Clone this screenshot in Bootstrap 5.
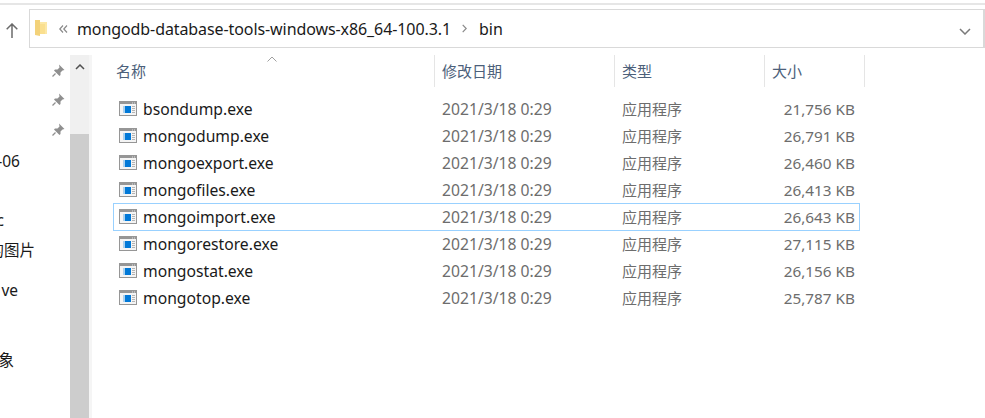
<!DOCTYPE html>
<html lang="zh-CN">
<head>
    <meta charset="UTF-8">
    <title>bin</title>
    <link href="https://cdn.jsdelivr.net/npm/bootstrap@5.3.0/dist/css/bootstrap.min.css" rel="stylesheet">
    <style>
        body {
            width: 985px;
            height: 418px;
            overflow: hidden;
            background: #fff;
            font-family: "Noto Sans", "Noto Sans CJK SC", sans-serif;
            font-size: 15.5px;
            color: #1a1a1a;
        }
        .top-rule {
            height: 2px;
            margin-top: 3px;
            background: #e6e6e6;
        }
        .toolbar {
            height: 50px;
            padding-top: 4px;
        }
        .up-btn {
            width: 29px;
            padding: 14px 5px 0 0;
        }
        .address-bar {
            height: 39px;
            width: 956px;
            padding-left: 5px;
            border: 1px solid #d9d9d9;
            border-right-width: 2px;
            font-size: 16px;
        }
        .address-path { letter-spacing: -.09px; }
        .crumb-back { width: 30px; padding-left: 12px; }
        .crumb-next { width: 28px; padding-left: 11px; }
        .drop-btn { width: 24px; padding-top: 3px; }
        .main-pane { height: 363px; }
        .nav-pane { width: 70px; overflow: hidden; }
        .nav-row {
            height: 30px;
            padding-right: 5px;
            white-space: nowrap;
        }
        .pin-row { margin-bottom: -.4px; }
        .nav-clip { overflow: hidden; }
        .nav-clip span { flex-shrink: 0; }
        .pad-06 { padding-right: 50px; margin-top: 2px; }
        .pad-c { padding-right: 66px; }
        .pad-pic { padding-right: 35px; }
        .pad-ve { padding-right: 52px; }
        .pad-obj { padding-right: 56px; }
        .gap-ve { margin-top: 10px; }
        .gap-obj { margin-top: 40px; }
        .gap-c { margin-top: 29px; }
        .scroll-track {
            width: 19px;
            background: #f0f0f0;
        }
        .scroll-up { height: 15px; margin-top: 4px; }
        .scroll-thumb {
            margin-top: 60px;
            background: #cdcdcd;
        }
        .files-pane { border-left: 3px solid #f5f5f5; }
        .col-head {
            height: 32px;
            color: #4c607a;
            font-size: 15px;
            padding-left: 7px;
            border-right: 1px solid #e5e5e5;
        }
        .head-name { width: 343px; padding-left: 24px; position: relative; }
        .head-date { width: 180px; }
        .head-type { width: 150px; }
        .head-size { width: 100px; }
        .sort-mark { position: absolute; left: 175px; top: 1px; }
        .file-list { margin-top: 9px; margin-left: 21px; width: 747px; }
        .file-row {
            height: 27px;
            border: 1px solid transparent;
            font-size: 15.7px;
        }
        .file-row.is-focus { border-color: #99d1ff; height: 28px; margin-top: -1px; padding-top: 1px; }
        .file-icon { margin: 0 6px 2px 5px; flex-shrink: 0; }
        .file-name { width: 299px; }
        .file-date { width: 180px; color: #6d6d6d; }
        .file-type { width: 118px; color: #6d6d6d; font-size: 15px; }
        .file-size { width: 115px; color: #6d6d6d; font-size: 15.3px; text-align: right; }
    </style>
</head>
<body>
    <div class="top-rule"></div>

    <div class="toolbar d-flex">
        <div class="up-btn d-flex justify-content-center align-items-start">
            <svg width="12" height="15" viewBox="0 0 12 15"><path d="M6 1V15M.7 6.300 6 1l5.300 5.300" fill="none" stroke="#6b6b6b" stroke-width="1.500"/></svg>
        </div>
        <div class="address-bar d-flex align-items-center">
            <svg width="12" height="17" viewBox="0 0 12 17">
                <path d="M0 0h5v16l-5-1z" fill="#f3d27a"/>
                <path d="M5 2h7v12H5z" fill="#fce8a6"/>
                <path d="M5 4h5v10H5z" fill="#fadf8f"/>
            </svg>
            <div class="crumb-back d-flex">
                <svg width="9" height="8" viewBox="0 0 9 8"><path d="M4 .500.800 4 4 7.500M8 .500 4.800 4 8 7.500" fill="none" stroke="#8a8a8a" stroke-width="1.200"/></svg>
            </div>
            <span class="address-path">mongodb-database-tools-windows-x86_64-100.3.1</span>
            <div class="crumb-next d-flex">
                <svg width="5" height="9" viewBox="0 0 5 9"><path d="M.700.800 4.200 4.500.700 8.200" fill="none" stroke="#8a8a8a" stroke-width="1.200"/></svg>
            </div>
            <span>bin</span>
            <div class="flex-grow-1"></div>
            <div class="drop-btn">
                <svg width="12" height="7" viewBox="0 0 12 7"><path d="M1 1l5 5 5-5" fill="none" stroke="#7a7a7a" stroke-width="1.500"/></svg>
            </div>
        </div>
    </div>

    <div class="main-pane d-flex">
        <div class="nav-pane">
            <div class="nav-row pin-row d-flex align-items-center justify-content-end"><svg width="13" height="13" viewBox="0 0 13 13"><path d="M7 .5l5.500 5.500-2 .5-2 2v2.500l-1 1-5.500-5.500 1-1h2.500l2-2z" fill="#8f8f8f"/><path d="M3.500 9.500.5 12.500" stroke="#8f8f8f" stroke-width="1.200"/></svg></div>
            <div class="nav-row pin-row d-flex align-items-center justify-content-end"><svg width="13" height="13" viewBox="0 0 13 13"><path d="M7 .5l5.500 5.500-2 .5-2 2v2.500l-1 1-5.500-5.500 1-1h2.500l2-2z" fill="#8f8f8f"/><path d="M3.500 9.500.5 12.500" stroke="#8f8f8f" stroke-width="1.200"/></svg></div>
            <div class="nav-row d-flex align-items-center justify-content-end"><svg width="13" height="13" viewBox="0 0 13 13"><path d="M7 .5l5.500 5.500-2 .5-2 2v2.500l-1 1-5.500-5.500 1-1h2.500l2-2z" fill="#8f8f8f"/><path d="M3.500 9.500.5 12.500" stroke="#8f8f8f" stroke-width="1.200"/></svg></div>
            <div class="nav-row nav-clip pad-06 d-flex align-items-center justify-content-end"><span>-06</span></div>
            <div class="nav-row nav-clip pad-c gap-c d-flex align-items-center justify-content-end"><span>c</span></div>
            <div class="nav-row nav-clip pad-pic d-flex align-items-center justify-content-end"><span>的图片</span></div>
            <div class="nav-row nav-clip pad-ve gap-ve d-flex align-items-center justify-content-end"><span>ve</span></div>
            <div class="nav-row nav-clip pad-obj gap-obj d-flex align-items-center justify-content-end"><span>对象</span></div>
        </div>
        <div class="scroll-track d-flex flex-column">
            <div class="scroll-up d-flex justify-content-center align-items-center">
                <svg width="10" height="6" viewBox="0 0 10 6"><path d="M1 5l4-4 4 4" fill="none" stroke="#505050" stroke-width="1.500"/></svg>
            </div>
            <div class="scroll-thumb flex-grow-1"></div>
        </div>
        <div class="files-pane flex-grow-1">
            <div class="d-flex">
                <div class="col-head head-name d-flex align-items-center">名称
                    <svg class="sort-mark" width="10" height="6" viewBox="0 0 10 6"><path d="M.5 5.500 5 1l4.500 4.500" fill="none" stroke="#a0a0a0"/></svg>
                </div>
                <div class="col-head head-date d-flex align-items-center">修改日期</div>
                <div class="col-head head-type d-flex align-items-center">类型</div>
                <div class="col-head head-size d-flex align-items-center">大小</div>
            </div>
            <div class="file-list" id="file-list"></div>
        </div>
    </div>

    <script>
        const files = [
            ['bsondump.exe', '21,756 KB'],
            ['mongodump.exe', '26,791 KB'],
            ['mongoexport.exe', '26,460 KB'],
            ['mongofiles.exe', '26,413 KB'],
            ['mongoimport.exe', '26,643 KB'],
            ['mongorestore.exe', '27,115 KB'],
            ['mongostat.exe', '26,156 KB'],
            ['mongotop.exe', '25,787 KB']
        ];

        const exeIcon = `
            <svg class="file-icon" width="18" height="15" viewBox="0 0 18 15">
                <rect x=".5" y=".5" width="17" height="14" fill="#f4f4f4" stroke="#969696"/>
                <rect x="1" y="1" width="16" height="2" fill="#969696"/>
                <path d="M13 2h1M15 2h1" stroke="#e0e0e0"/>
                <rect x="6" y="5" width="6" height="7" fill="#0078d7"/>
                <rect x="4" y="5" width="2" height="7" fill="#a9d0ee"/>
                <path d="M13 5.500h3M13 7.500h3M13 9.500h3M13 11.500h3" stroke="#b4b4b4"/>
            </svg>`;

        const list = document.getElementById('file-list');
        files.forEach((file, i) => {
            const row = document.createElement('div');
            row.className = 'file-row d-flex align-items-center' + (i === 4 ? ' is-focus' : '');
            row.innerHTML = `
                ${exeIcon}
                <span class="file-name">${file[0]}</span>
                <span class="file-date">2021/3/18 0:29</span>
                <span class="file-type">应用程序</span>
                <span class="file-size">${file[1]}</span>`;
            list.appendChild(row);
        });
    </script>
    <script src="https://cdn.jsdelivr.net/npm/bootstrap@5.3.0/dist/js/bootstrap.bundle.min.js"></script>
</body>
</html>
